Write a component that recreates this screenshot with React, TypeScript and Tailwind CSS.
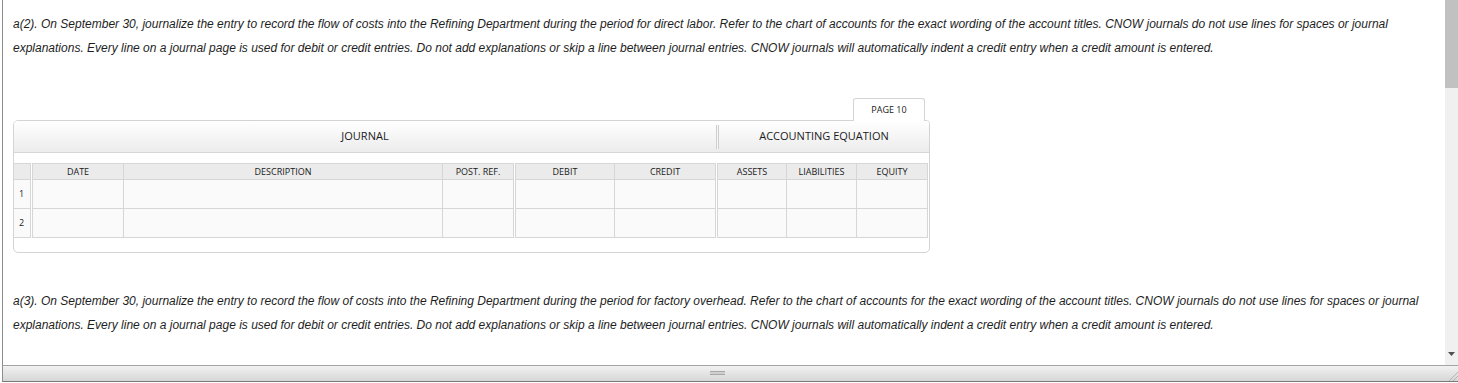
import React from "react";

const P1 = [
  "a(2). On September 30, journalize the entry to record the flow of costs into the Refining Department during the period for direct labor. Refer to the chart of accounts for the exact wording of the account titles. CNOW journals do not use lines for spaces or journal",
  "explanations. Every line on a journal page is used for debit or credit entries. Do not add explanations or skip a line between journal entries. CNOW journals will automatically indent a credit entry when a credit amount is entered.",
];
const P2 = [
  "a(3). On September 30, journalize the entry to record the flow of costs into the Refining Department during the period for factory overhead. Refer to the chart of accounts for the exact wording of the account titles. CNOW journals do not use lines for spaces or journal",
  "explanations. Every line on a journal page is used for debit or credit entries. Do not add explanations or skip a line between journal entries. CNOW journals will automatically indent a credit entry when a credit amount is entered.",
];

function Para({ lines }: { lines: string[] }) {
  return (
    <div className="text-[12px] italic text-[#1e1e1e] leading-[24px] font-['Liberation_Sans',Arial,sans-serif]">
      {lines.map((l, i) => (
        <div key={i} className="whitespace-nowrap">
          {l}
        </div>
      ))}
    </div>
  );
}

function Row({ header, num }: { header?: boolean; num?: string }) {
  const h = header ? "h-[17px] border-t bg-[#ebebeb]" : "h-[29px] bg-[#fafafa]";
  const c = `${h} border-b border-[#d6d6d6] flex items-center justify-center text-[9px] text-[#1a1a1a]`;
  return (
    <div className="flex">
      <div className={`${c} w-[17px] border-r !justify-start pl-[5px] text-[8px]`}>{num}</div>
      <div className="w-[1px]" />
      <div className={`${c} w-[92px] border-l border-r`}>{header && "DATE"}</div>
      <div className={`${c} w-[319px] border-r`}>{header && "DESCRIPTION"}</div>
      <div className={`${c} w-[71px] border-r`}>{header && "POST. REF."}</div>
      <div className="w-[1px]" />
      <div className={`${c} w-[100px] border-l border-r`}>{header && "DEBIT"}</div>
      <div className={`${c} w-[101px] border-r`}>{header && "CREDIT"}</div>
      <div className="w-[1px]" />
      <div className={`${c} w-[70px] border-l border-r`}>{header && "ASSETS"}</div>
      <div className={`${c} w-[70px] border-r`}>{header && "LIABILITIES"}</div>
      <div className={`${c} w-[71px] border-r`}>{header && "EQUITY"}</div>
    </div>
  );
}

function Journal() {
  return (
    <div className="w-[917px] font-['Open_Sans',sans-serif]">
      <div className="flex justify-end pr-[5px]">
        <div className="relative z-10 -mb-[1px] w-[72px] h-[23px] bg-white border border-b-0 border-[#d4d4d4] rounded-t-[3px] flex items-center justify-center text-[9px] text-[#1a1a1a]">
          PAGE 10
        </div>
      </div>
      <div className="border border-[#d4d4d4] rounded-[5px] rounded-tr-[4px] bg-white overflow-hidden">
        <div className="h-[32px] border-b border-[#d6d6d6] bg-gradient-to-b from-white to-[#ececec] flex items-center text-[11px] text-[#1a1a1a]">
          <div className="w-[702px] text-center">JOURNAL</div>
          <div className="w-[3px] h-[24px] border-l border-r border-[#cfcfcf] bg-[#f6f6f6]" />
          <div className="flex-1 text-center">ACCOUNTING EQUATION</div>
        </div>
        <div className="h-[10px]" />
        <Row header />
        <Row num="1" />
        <Row num="2" />
        <div className="h-[14px]" />
      </div>
    </div>
  );
}

export default function App() {
  return (
    <div className="w-[1458px] h-[383px] bg-white flex flex-col overflow-hidden">
      <div className="flex h-[365px] ml-[2px] border-l border-[#8c8c8c]">
        <div className="flex-1 pl-[10px] pt-[12px] overflow-hidden">
          <Para lines={P1} />
          <div className="mt-[38px]">
            <Journal />
          </div>
          <div className="mt-[36px]">
            <Para lines={P2} />
          </div>
        </div>
        <div className="w-[13px] bg-[#f0f0f0] flex flex-col items-center">
          <div className="w-full h-[88px] bg-[#c1c1c1]" />
          <div className="flex-1" />
          <svg width="7" height="4" viewBox="0 0 7 4" className="mb-[9px]">
            <path d="M0 0 H7 L3.5 4 Z" fill="#505050" />
          </svg>
        </div>
      </div>
      <div className="relative h-[17px] ml-[2px] border-l border-t border-b border-l-[#8c8c8c] border-t-[#a3a3a3] border-b-[#7a7a7a] bg-gradient-to-b from-[#f2f2f2] to-[#d6d6d6]">
        <div className="absolute left-[707px] top-[5px] w-[15px] h-[4px] border-t border-b border-[#a8a8a8] bg-[#cfcfcf]" />
        <svg width="10" height="10" viewBox="0 0 10 10" className="absolute right-0 bottom-0">
          <path d="M10 1 L1 10 M10 5 L5 10" stroke="#b5b5b5" strokeWidth="1" />
        </svg>
      </div>
    </div>
  );
}
